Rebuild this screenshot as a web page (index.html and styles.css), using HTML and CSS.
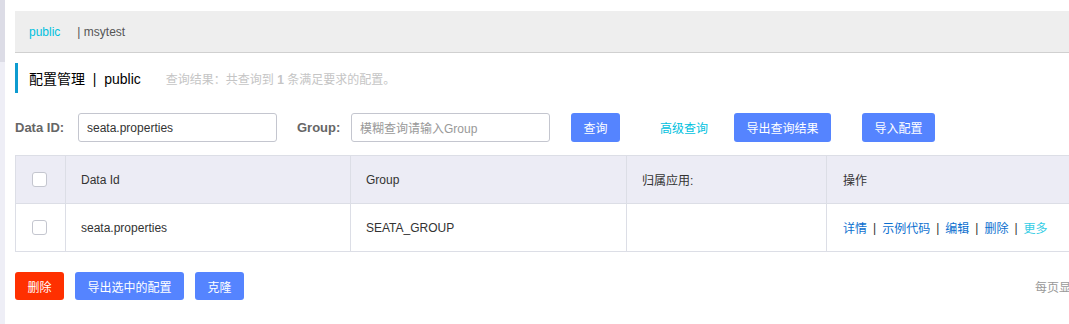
FILE: index.html
```html
<!DOCTYPE html>
<html lang="zh">
<head>
<meta charset="utf-8">
<title>配置管理</title>
<link rel="stylesheet" href="styles.css">
</head>
<body>
<div class="layout">
  <div class="side"><div class="side-top"></div></div>
  <div class="main">
    <div class="ns-bar">
      <span class="ns-active">public</span>
      <span class="ns-item">| msytest</span>
    </div>
    <div class="title-row">
      <span class="title">配置管理 &nbsp;|&nbsp; public</span>
      <span class="title-hint">查询结果：共查询到 <b>1</b> 条满足要求的配置。</span>
    </div>
    <div class="search-row">
      <label class="lbl">Data ID:</label>
      <div class="input"><span class="val">seata.properties</span></div>
      <label class="lbl lbl-group">Group:</label>
      <div class="input"><span class="ph">模糊查询请输入Group</span></div>
      <button class="btn btn-query">查询</button>
      <a class="adv">高级查询</a>
      <button class="btn btn-export">导出查询结果</button>
      <button class="btn btn-import">导入配置</button>
    </div>
    <div class="table">
      <div class="tr thead">
        <div class="td c-check"><span class="cb"></span></div>
        <div class="td c-id">Data Id</div>
        <div class="td c-group">Group</div>
        <div class="td c-app">归属应用:</div>
        <div class="td c-op">操作</div>
      </div>
      <div class="tr">
        <div class="td c-check"><span class="cb"></span></div>
        <div class="td c-id">seata.properties</div>
        <div class="td c-group">SEATA_GROUP</div>
        <div class="td c-app"></div>
        <div class="td c-op ops">
          <a>详情</a><span class="sep">|</span><a>示例代码</a><span class="sep">|</span><a>编辑</a><span class="sep">|</span><a>删除</a><span class="sep">|</span><a class="more">更多</a>
        </div>
      </div>
    </div>
    <div class="footer-row">
      <div class="footer-btns">
        <button class="btn btn-del">删除</button>
        <button class="btn btn-exp-sel">导出选中的配置</button>
        <button class="btn btn-clone">克隆</button>
      </div>
      <span class="page-size">每页显</span>
    </div>
  </div>
</div>
</body>
</html>
```
FILE: styles.css
```css
* { box-sizing: border-box; }
html, body { margin: 0; padding: 0; }
body {
  width: 1069px;
  height: 324px;
  overflow: hidden;
  background: #fff;
  font-family: "Liberation Sans", "Noto Sans CJK SC", sans-serif;
  font-size: 12px;
  color: #333;
}
.layout { display: flex; height: 324px; }
.side { width: 5px; flex: none; background: #eeeef6; }
.side-top { height: 62px; background: #dcdce6; }
.main { flex: none; width: 1200px; margin-left: 10px; padding-top: 11px; }

.ns-bar {
  height: 42px;
  background: #eeeeee;
  border-bottom: 1px solid #d0d0d0;
  display: flex;
  align-items: center;
  padding-left: 14px;
  font-size: 12px;
}
.ns-active { color: #00c1de; }
.ns-item { color: #555; margin-left: 17px; }

.title-row {
  margin-top: 10px;
  height: 30px;
  border-left: 3px solid #0d9bd0;
  display: flex;
  align-items: center;
  padding-left: 11px;
}
.title { font-size: 14px; color: #000; }
.title-hint { margin-left: 25px; color: #c5c5c5; font-size: 12px; }
.title-hint b { font-weight: bold; }

.search-row {
  margin-top: 20px;
  height: 29px;
  display: flex;
  align-items: center;
}
.lbl { font-weight: bold; color: #666; font-size: 13px; width: 63px; flex: none; }
.lbl-group { margin-left: 20px; width: 54px; }
.input {
  width: 199px;
  height: 29px;
  border: 1px solid #c4c6cf;
  border-radius: 3px;
  display: flex;
  align-items: center;
  padding-left: 8px;
  flex: none;
}
.val { color: #333; }
.ph { color: #999; }
.btn {
  height: 29px;
  border: 0;
  border-radius: 3px;
  background: #5584ff;
  color: #fff;
  font-family: "Liberation Sans", "Noto Sans CJK SC", sans-serif;
  font-size: 12px;
  padding: 0;
  flex: none;
}
.btn-query { width: 49px; margin-left: 21px; }
.adv { color: #00c1de; margin-left: 40px; width: 48px; flex: none; }
.btn-export { width: 97px; margin-left: 26px; }
.btn-import { width: 73px; margin-left: 31px; }

.table {
  margin-top: 13px;
  width: 1100px;
  border-top: 1px solid #dcdee6;
  border-left: 1px solid #dcdee6;
}
.tr { display: flex; height: 48px; border-bottom: 1px solid #dcdee6; }
.thead { background: #ececf5; }
.td {
  display: flex;
  align-items: center;
  padding-left: 15px;
  border-right: 1px solid #dcdee6;
  flex: none;
}
.c-check { width: 50px; padding-left: 16px; }
.c-id { width: 285px; }
.c-group { width: 276px; }
.c-app { width: 200px; }
.c-op { flex: 1; border-right: 0; padding-left: 16px; }
.cb {
  width: 15px;
  height: 15px;
  border: 1px solid #c4c6cf;
  border-radius: 3px;
  background: #fff;
}
.ops a { color: #0b6fcf; }
.ops a.more { color: #33cde5; }
.sep { color: #333; margin: 0 6px; }

.footer-row {
  margin-top: 20px;
  width: 1056px;
  display: flex;
  align-items: center;
  justify-content: space-between;
}
.footer-btns { display: flex; gap: 11px; }
.footer-btns .btn { height: 28px; }
.btn-del { width: 49px; background: #ff3000; }
.btn-exp-sel { width: 109px; }
.btn-clone { width: 49px; }
.page-size { color: #999; white-space: nowrap; }
```
